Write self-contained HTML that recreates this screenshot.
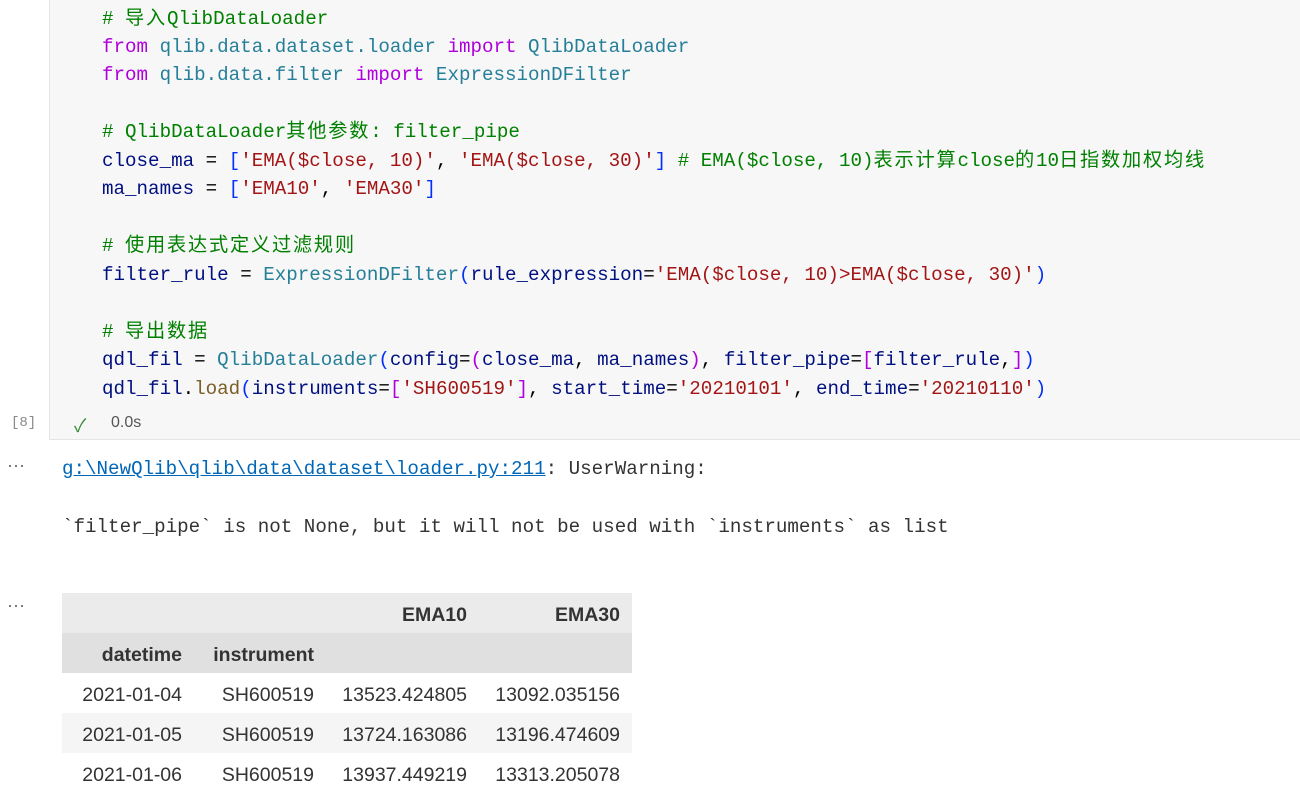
<!DOCTYPE html>
<html><head><meta charset="utf-8"><style>
body{margin:0;width:1300px;height:793px;background:#fff;position:relative;overflow:hidden;font-family:"Liberation Sans","Noto Sans CJK SC",sans-serif}
.cell{position:absolute;left:49px;top:0;width:1251px;height:439px;background:#f7f7f7;border-bottom:1px solid #e5e5e5;border-left:1px solid #e5e5e5}
.l{position:absolute;left:102px;font-family:"Liberation Mono","Noto Sans CJK SC",monospace;font-size:19.2px;line-height:24px;white-space:pre;color:#001080}
.c{color:#008000}.k{color:#af00db}.t{color:#267f99}.s{color:#a31515}.b{color:#0431fa}.p{color:#000}.f{color:#795e26}
.z{letter-spacing:1.8px}
.o{position:absolute;left:62px;font-family:"Liberation Mono",monospace;font-size:19.2px;line-height:24px;white-space:pre;color:#333}
.dots{position:absolute;left:7px;color:#666;font-size:18px}
table{position:absolute;left:62px;top:593px;border-collapse:collapse;font-size:19.5px;color:#333}
td,th{height:40px;padding:4px 12px 0;box-sizing:border-box;text-align:right;white-space:nowrap}
th{font-weight:bold}
</style></head><body>
<div class="cell"></div>
<div class="l c" style="top:7px"># <span class="z">导入</span>QlibDataLoader</div>
<div class="l" style="top:35px"><span class="k">from</span><span class="t"> qlib.data.dataset.loader </span><span class="k">import</span><span class="t"> QlibDataLoader</span></div>
<div class="l" style="top:63px"><span class="k">from</span><span class="t"> qlib.data.filter </span><span class="k">import</span><span class="t"> ExpressionDFilter</span></div>
<div class="l c" style="top:120px"># QlibDataLoader<span class="z">其他参数</span>: filter_pipe</div>
<div class="l" style="top:149px">close_ma <span class="p">=</span> <span class="b">[</span><span class="s">'EMA($close, 10)'</span><span class="p">,</span> <span class="s">'EMA($close, 30)'</span><span class="b">]</span> <span class="c"># EMA($close, 10)<span class="z">表示计算</span>close<span class="z">的</span>10<span class="z">日指数加权均线</span></span></div>
<div class="l" style="top:177px">ma_names <span class="p">=</span> <span class="b">[</span><span class="s">'EMA10'</span><span class="p">,</span> <span class="s">'EMA30'</span><span class="b">]</span></div>
<div class="l c" style="top:234px"># <span class="z">使用表达式定义过滤规则</span></div>
<div class="l" style="top:263px">filter_rule <span class="p">=</span> <span class="t">ExpressionDFilter</span><span class="b">(</span>rule_expression<span class="p">=</span><span class="s">'EMA($close, 10)&gt;EMA($close, 30)'</span><span class="b">)</span></div>
<div class="l c" style="top:320px"># <span class="z">导出数据</span></div>
<div class="l" style="top:348px">qdl_fil <span class="p">=</span> <span class="t">QlibDataLoader</span><span class="b">(</span>config<span class="p">=</span><span class="k">(</span>close_ma<span class="p">,</span> ma_names<span class="k">)</span><span class="p">,</span> filter_pipe<span class="p">=</span><span class="k">[</span>filter_rule<span class="p">,</span><span class="k">]</span><span class="b">)</span></div>
<div class="l" style="top:377px">qdl_fil<span class="p">.</span><span class="f">load</span><span class="b">(</span>instruments<span class="p">=</span><span class="k">[</span><span class="s">'SH600519'</span><span class="k">]</span><span class="p">,</span> start_time<span class="p">=</span><span class="s">'20210101'</span><span class="p">,</span> end_time<span class="p">=</span><span class="s">'20210110'</span><span class="b">)</span></div>
<div style="position:absolute;left:11px;top:415px;font-family:'Liberation Mono',monospace;font-size:14px;color:#888">[8]</div>
<div style="position:absolute;left:74px;top:412px;font-size:18px;color:#388a34">✓</div>
<div style="position:absolute;left:111px;top:414px;font-size:16px;color:#555">0.0s</div>
<div class="dots" style="top:455px">···</div>
<div class="o" style="top:457px"><span style="color:#0066b8;text-decoration:underline">g:\NewQlib\qlib\data\dataset\loader.py:211</span>: UserWarning:</div>
<div class="o" style="top:515px">`filter_pipe` is not None, but it will not be used with `instruments` as list</div>
<div class="dots" style="top:595px">···</div>
<table>
<tr style="background:#ebebeb"><th style="width:132px"></th><th style="width:132px"></th><th style="width:153px">EMA10</th><th style="width:153px">EMA30</th></tr>
<tr style="background:#e0e0e0"><th>datetime</th><th>instrument</th><th></th><th></th></tr>
<tr><td>2021-01-04</td><td>SH600519</td><td>13523.424805</td><td>13092.035156</td></tr>
<tr style="background:#f5f5f5"><td>2021-01-05</td><td>SH600519</td><td>13724.163086</td><td>13196.474609</td></tr>
<tr><td>2021-01-06</td><td>SH600519</td><td>13937.449219</td><td>13313.205078</td></tr>
</table>
</body></html>
